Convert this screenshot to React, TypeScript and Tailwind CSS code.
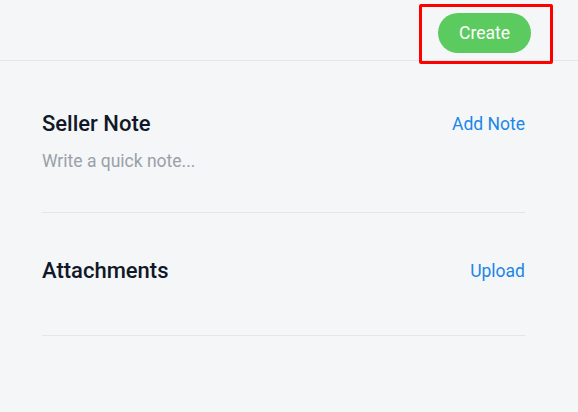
import React from 'react';

export default function App() {
    return (
        <div className="min-h-[412px] w-[578px] bg-[#f5f6f8] font-['Roboto',sans-serif]">
            <header className="relative flex h-[61px] items-start justify-end border-b border-[#e3e5e8] pr-[47px] pt-[13px]">
                <button className="h-[40px] w-[93px] rounded-full bg-[#5ccb5f] pt-[1px] text-[17.5px] text-white">Create</button>
                {/* highlight box */}
                <div className="pointer-events-none absolute left-[419px] top-[4px] h-[60px] w-[134px] rounded-[2px] border-[3px] border-[#ff0000]" />
            </header>
            <main className="px-[42px] pr-[53px]">
                <div className="pt-[48px] pb-[38px] border-b border-[#e3e5e8]">
                    <div className="flex items-center justify-between">
                        <h2 className="text-[22px] leading-[30px] font-medium text-[#111827]">Seller Note</h2>
                        <button className="text-[17.5px] leading-[26px] text-[#1a86e8]">Add Note</button>
                    </div>
                    <p className="mt-[9px] text-[17.5px] leading-[26px] text-[#9aa0a8]">Write a quick note...</p>
                </div>
                <div className="pt-[43px] pb-[49px] border-b border-[#e3e5e8]">
                    <div className="flex items-center justify-between">
                        <h2 className="text-[22px] leading-[30px] font-medium text-[#111827]">Attachments</h2>
                        <button className="text-[17.5px] leading-[26px] text-[#1a86e8]">Upload</button>
                    </div>
                </div>
            </main>
        </div>
    );
}
